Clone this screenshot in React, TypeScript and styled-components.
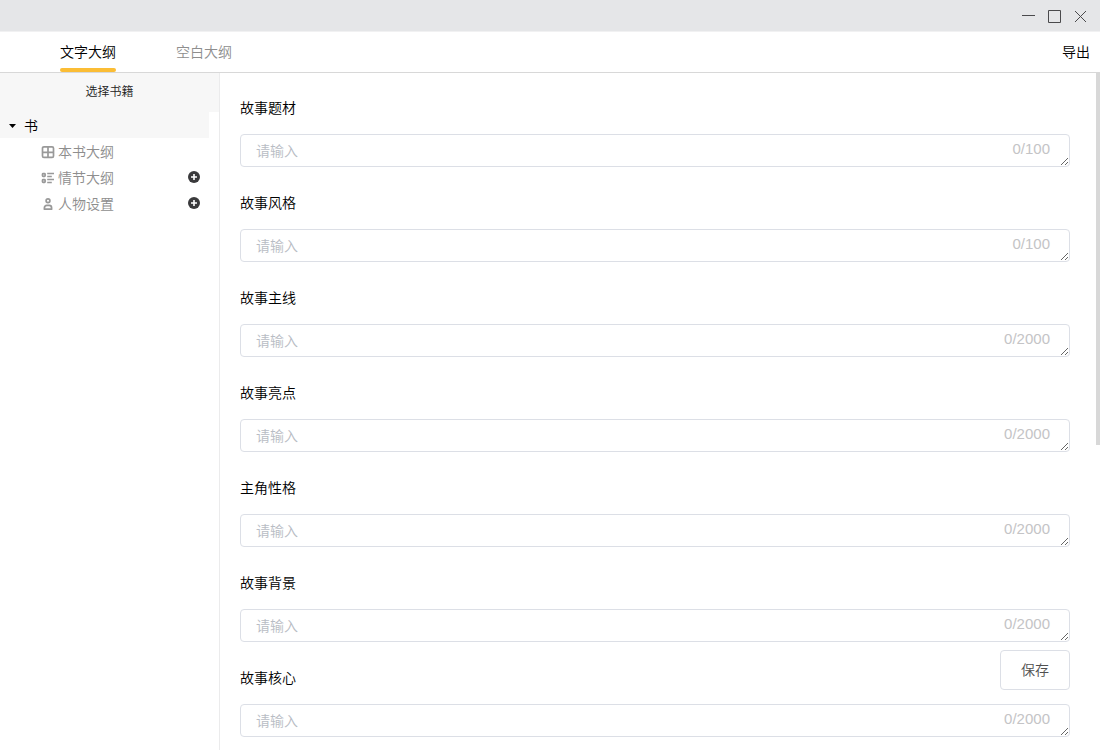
import React, { useState } from "react";
import styled, { createGlobalStyle } from "styled-components";

const GlobalStyle = createGlobalStyle`
  *, *::before, *::after { box-sizing: border-box; }
  body {
    margin: 0;
    background: #fff;
    color: #000;
    font: 350 14px/20px "Liberation Sans", "Noto Sans CJK SC", sans-serif;
  }
  button, textarea { font: inherit; }
`;

const Window = styled.div`
  display: flex;
  flex-direction: column;
  height: 100vh;
  overflow: hidden;
`;

const TitleBar = styled.header`
  display: flex;
  flex: none;
  justify-content: flex-end;
  align-items: center;
  gap: 10px;
  height: 32px;
  padding-right: 12px;
  background: #e5e6e8;
  border-bottom: 1px solid #f1f1f2;
`;

const PlainButton = styled.button`
  display: flex;
  padding: 0;
  border: 0;
  background: none;
  color: inherit;
  cursor: pointer;
`;

const WindowButton = styled(PlainButton)`
  width: 16px;
  height: 16px;
  color: #4a4a4c;
`;

const TabBar = styled.nav`
  display: flex;
  flex: none;
  align-items: stretch;
  gap: 60px;
  height: 41px;
  padding: 0 10px 0 60px;
  border-bottom: 1px solid #d8d8d8;
`;

const Tab = styled(PlainButton)<{ $active: boolean }>`
  flex-direction: column;
  justify-content: space-between;
  padding-top: 10px;
  color: ${(p) => (p.$active ? "#000" : "#8e8e8e")};

  &::after {
    content: "";
    width: 100%;
    height: 4px;
    border-radius: 2px;
    background: ${(p) => (p.$active ? "#fbbd35" : "transparent")};
  }
`;

const ExportButton = styled(PlainButton)`
  align-items: center;
  margin-left: auto;
`;

const Body = styled.div`
  display: flex;
  flex: 1;
  min-height: 0;
`;

const Sidebar = styled.aside`
  flex: none;
  width: 220px;
  border-right: 1px solid #ebebec;
`;

const SidebarTitle = styled.h2`
  margin: 0;
  background: #f7f7f7;
  color: #222;
  font-size: 12px;
  font-weight: inherit;
  line-height: 39px;
  text-align: center;
`;

const Tree = styled.div`
  margin-right: 10px;
`;

const TreeRoot = styled(PlainButton)`
  align-items: center;
  gap: 7px;
  width: 100%;
  height: 26px;
  padding: 2px 8px 0;
  background: #f7f7f7;
`;

const TreeList = styled.ul`
  margin: 0;
  padding: 0;
  list-style: none;
`;

const TreeItem = styled.li`
  display: flex;
  justify-content: space-between;
  height: 26px;
  padding: 0 9px 0 41px;
`;

const TreeLink = styled.a`
  display: flex;
  align-items: center;
  gap: 3px;
  padding-top: 2px;
  color: #8e8e8e;
  text-decoration: none;
`;

const AddButton = styled(PlainButton)`
  align-items: center;
`;

const Main = styled.main`
  position: relative;
  flex: 1;
  min-width: 0;
`;

const Form = styled.form`
  height: 100%;
  padding: 25px 30px 0 20px;
  overflow-y: auto;
  scrollbar-width: none;
`;

const Field = styled.div`
  margin-bottom: 26px;
`;

const Label = styled.label`
  display: block;
  margin-bottom: 16px;
`;

const InputBox = styled.div`
  position: relative;
  display: flex;
`;

const TextArea = styled.textarea`
  width: 100%;
  height: 33px;
  min-height: 33px;
  padding: 6px 15px 4px;
  border: 1px solid #dcdfe6;
  border-radius: 4px;
  background: #fff;
  color: #606266;
  line-height: 21px;
  resize: vertical;
  outline: none;

  &::placeholder { color: #b8bcc4; }
`;

const Counter = styled.span`
  position: absolute;
  right: 20px;
  bottom: 8px;
  color: #c4c4c6;
  font-size: 15px;
  pointer-events: none;
`;

const ScrollThumb = styled.div`
  position: absolute;
  top: 0;
  right: 0;
  width: 4px;
  height: 55%;
  background: #d8d8d8;
`;

const SaveButton = styled.button`
  position: absolute;
  right: 30px;
  bottom: 60px;
  padding: 9px 20px;
  border: 1px solid #dcdfe6;
  border-radius: 4px;
  background: #fff;
  color: #505050;
  cursor: pointer;
`;

const BookIcon = () => (
  <svg width="14" height="14" viewBox="0 0 14 14" fill="none" stroke="#999" strokeWidth="1.7" aria-hidden="true">
    <rect x="1.5" y="1.8" width="11" height="10.6" rx="1.4" />
    <path d="M7 2v10.4M2 7.3h10.4" />
  </svg>
);

const PlotIcon = () => (
  <svg width="14" height="14" viewBox="0 0 14 14" fill="none" stroke="#999" aria-hidden="true">
    <rect x="1.5" y="2.7" width="2.6" height="2.6" rx="0.6" strokeWidth="1.7" />
    <rect x="1.5" y="8.7" width="2.6" height="2.6" rx="0.6" strokeWidth="1.7" />
    <path d="M6.2 2.5h6.8M6.2 5.5h4.6M6.2 8.5h6.8M6.2 11.5h4.6" strokeWidth="1.5" />
  </svg>
);

const PersonIcon = () => (
  <svg width="14" height="14" viewBox="0 0 14 14" fill="none" stroke="#999" strokeWidth="1.7" aria-hidden="true">
    <circle cx="7" cy="3.8" r="1.9" />
    <path d="M3.4 12.2v-1.200c0-1.600 1-2.600 2.400-2.600h2.400c1.400 0 2.400 1 2.400 2.600v1.200z" strokeLinejoin="round" />
  </svg>
);

const AddIcon = () => (
  <svg width="12" height="12" viewBox="0 0 12 12" aria-hidden="true">
    <circle cx="6" cy="6" r="6" fill="#3a3a3c" />
    <path d="M6 3v6M3 6h6" stroke="#fff" strokeWidth="1.6" />
  </svg>
);

const windowControls = [
  { label: "最小化", path: "M2 7.5h13" },
  { label: "最大化", path: "M2.5 2.5h12v12h-12z" },
  { label: "关闭", path: "M3 3l11 11M14 3L3 14" },
];

const tabs = ["文字大纲", "空白大纲"];

const treeItems = [
  { name: "本书大纲", Icon: BookIcon, canAdd: false },
  { name: "情节大纲", Icon: PlotIcon, canAdd: true },
  { name: "人物设置", Icon: PersonIcon, canAdd: true },
];

const fields = [
  { id: "theme", label: "故事题材", max: 100 },
  { id: "style", label: "故事风格", max: 100 },
  { id: "storyline", label: "故事主线", max: 2000 },
  { id: "highlight", label: "故事亮点", max: 2000 },
  { id: "character", label: "主角性格", max: 2000 },
  { id: "background", label: "故事背景", max: 2000 },
  { id: "core", label: "故事核心", max: 2000 },
];

function LimitedField({ id, label, max }: { id: string; label: string; max: number }) {
  const [value, setValue] = useState("");
  return (
    <Field>
      <Label htmlFor={id}>{label}</Label>
      <InputBox>
        <TextArea
          id={id}
          rows={1}
          maxLength={max}
          placeholder="请输入"
          value={value}
          onChange={(e) => setValue(e.target.value)}
        />
        <Counter>{`${value.length}/${max}`}</Counter>
      </InputBox>
    </Field>
  );
}

export default function App() {
  const [activeTab, setActiveTab] = useState(tabs[0]);
  const [open, setOpen] = useState(true);

  return (
    <Window>
      <GlobalStyle />
      <TitleBar>
        {windowControls.map((c) => (
          <WindowButton key={c.label} type="button" aria-label={c.label}>
            <svg width="16" height="16" viewBox="0 0 16 16" fill="none" stroke="currentColor" aria-hidden="true">
              <path d={c.path} />
            </svg>
          </WindowButton>
        ))}
      </TitleBar>
      <TabBar>
        {tabs.map((t) => (
          <Tab key={t} type="button" $active={t === activeTab} onClick={() => setActiveTab(t)}>
            {t}
          </Tab>
        ))}
        <ExportButton type="button">导出</ExportButton>
      </TabBar>
      <Body>
        <Sidebar>
          <SidebarTitle>选择书籍</SidebarTitle>
          <Tree>
            <TreeRoot type="button" aria-expanded={open} onClick={() => setOpen(!open)}>
              <svg width="9" height="6" viewBox="0 0 9 6" aria-hidden="true">
                <path d="M1 1h7L4.5 5z" />
              </svg>
              书
            </TreeRoot>
            {open && (
              <TreeList>
                {treeItems.map(({ name, Icon, canAdd }) => (
                  <TreeItem key={name}>
                    <TreeLink href="#">
                      <Icon />
                      {name}
                    </TreeLink>
                    {canAdd && (
                      <AddButton type="button" aria-label={`添加${name}`}>
                        <AddIcon />
                      </AddButton>
                    )}
                  </TreeItem>
                ))}
              </TreeList>
            )}
          </Tree>
        </Sidebar>
        <Main>
          <Form>
            {fields.map((f) => (
              <LimitedField key={f.id} {...f} />
            ))}
          </Form>
          <ScrollThumb />
          <SaveButton type="button">保存</SaveButton>
        </Main>
      </Body>
    </Window>
  );
}
